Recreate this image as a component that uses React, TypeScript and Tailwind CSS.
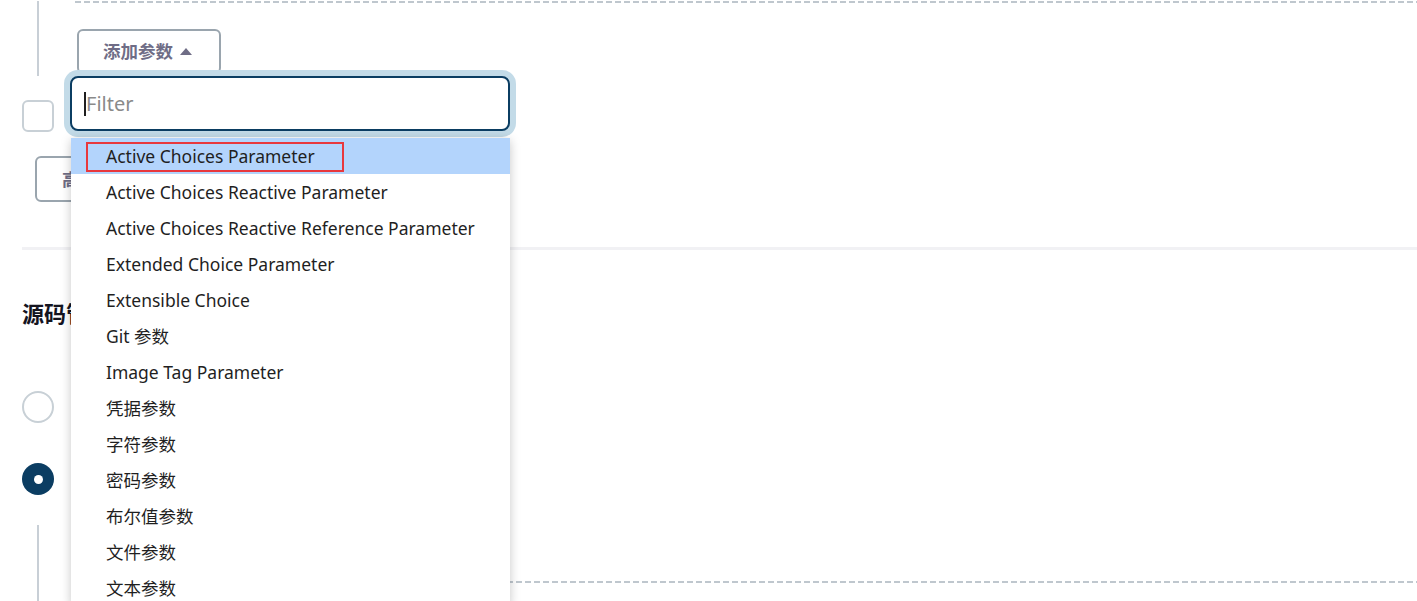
const options = [
  'Active Choices Parameter',
  'Active Choices Reactive Parameter',
  'Active Choices Reactive Reference Parameter',
  'Extended Choice Parameter',
  'Extensible Choice',
  'Git 参数',
  'Image Tag Parameter',
  '凭据参数',
  '字符参数',
  '密码参数',
  '布尔值参数',
  '文件参数',
  '文本参数',
]

const font = { fontFamily: '"Noto Sans", "Noto Sans CJK SC", sans-serif' }

export default function App() {
  return (
    <div className="relative h-[601px] w-[1417px] overflow-hidden bg-white text-[#1f1f1f]" style={font}>
      {/* 参数区域 */}
      <div className="ml-[37px] h-[75px] border-l-2 border-[#c8cfd6] pl-[36px]">
        <div className="mt-px h-[2px] bg-[repeating-linear-gradient(90deg,#bfc7ce_0_6px,transparent_6px_9px)]" />
        <button className="ml-[2px] mt-[26px] flex h-[45px] w-[144px] items-center gap-[7px] rounded-md border-2 border-[#9aa5ae] pl-[24px] text-[17.5px] font-bold text-[#6f6d86]">
          添加参数
          <svg width="12" height="7" viewBox="0 0 12 7">
            <path d="M0 7 L6 0 L12 7 Z" fill="#6f6d86" />
          </svg>
        </button>
      </div>

      <div className="pl-[22px]">
        <div className="mt-[24px] h-[32px] w-[32px] rounded-md border-2 border-[#c8d0d6]" />
        <button className="ml-[13px] mt-[24px] flex h-[46px] w-[120px] items-center rounded-md border-2 border-[#9aa5ae] pl-[25px] text-[17.5px] font-bold text-[#6f6d86]">
          高级
        </button>
        <div className="mt-[45px] h-[3px] bg-[#f1f1f4]" />
        <h2 className="mt-[48px] text-[22px] font-bold leading-[30px] text-[#14141f]">源码管理</h2>
        <div className="mt-[63px] flex flex-col gap-[40px]">
          <div className="h-[32px] w-[32px] rounded-full border-2 border-[#c8d0d6]" />
          <div className="flex h-[32px] w-[32px] items-center justify-center rounded-full bg-[#0b3d62]">
            <div className="h-[9px] w-[9px] rounded-full bg-white" />
          </div>
        </div>
        <div className="ml-[15px] mt-[30px] h-[80px] border-l-2 border-[#c8cfd6] pl-[36px] pt-[56px]">
          <div className="h-[2px] bg-[repeating-linear-gradient(90deg,#bfc7ce_0_6px,transparent_6px_9px)]" />
        </div>
      </div>

      {/* 下拉菜单 */}
      <div className="absolute left-[70px] top-[76px] w-[440px]">
        <div className="flex h-[55px] items-center rounded-lg border-2 border-[#0b3d62] bg-white pl-[12px] shadow-[0_0_0_6px_#c3dbe8]">
          <span className="h-[24px] w-[2px] bg-[#1f1f1f]" />
          <span className="text-[20px] text-[#8a8a8a]">Filter</span>
        </div>
        <ul className="relative ml-[1px] mt-[7px] bg-white shadow-[0_2px_10px_rgba(0,0,0,0.22)]">
          {options.map((opt, i) => (
            <li
              key={opt}
              className={`flex h-[36px] items-center pl-[35px] text-[17.5px] ${i === 0 ? 'bg-[#b3d4fc]' : ''}`}
            >
              {opt}
            </li>
          ))}
          <div className="absolute left-[15px] top-[4px] h-[30px] w-[258px] border-2 border-[#e8383d]" />
        </ul>
      </div>
    </div>
  )
}
